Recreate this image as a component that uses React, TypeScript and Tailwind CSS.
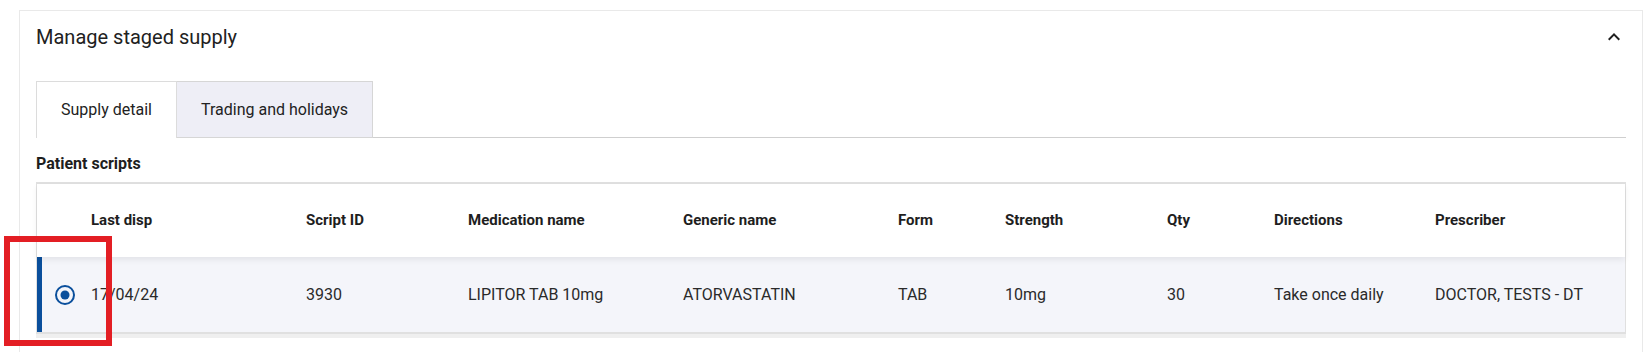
import React from "react";

const columns = [
  "Last disp",
  "Script ID",
  "Medication name",
  "Generic name",
  "Form",
  "Strength",
  "Qty",
  "Directions",
  "Prescriber",
];

const row = [
  "17/04/24",
  "3930",
  "LIPITOR TAB 10mg",
  "ATORVASTATIN",
  "TAB",
  "10mg",
  "30",
  "Take once daily",
  "DOCTOR, TESTS - DT",
];

const grid =
  "grid grid-cols-[54px_215px_162px_215px_215px_107px_162px_107px_161px_1fr]";

export default function App() {
  return (
    <div
      className="relative h-[352px] overflow-hidden bg-white pt-[10px] pl-[19px] pr-[1px] text-[#222]"
      style={{ fontFamily: "Roboto, 'Liberation Sans', sans-serif" }}
    >
      <div className="border border-[#e9e9e9] px-4 pt-3 pb-8">
        {/* header */}
        <div className="flex items-center justify-between">
          <h2 className="text-[20px] leading-[28px] text-[#212121]">Manage staged supply</h2>
          <svg className="w-6 h-6 text-[#1f1f1f]" viewBox="0 0 24 24" fill="currentColor">
            <path d="M7.41 15.41L12 10.83l4.59 4.58L18 14l-6-6-6 6z" />
          </svg>
        </div>

        {/* tabs */}
        <div className="mt-[30px] flex items-end">
          <button className="h-[57px] px-6 border-l border-t border-r border-[#dcdcdc] bg-white text-[16px] text-[#222]">
            Supply detail
          </button>
          <button className="h-[57px] px-6 border-t border-r border-b border-[#d6d6d6] bg-[#eeeef6] text-[16px] text-[#222]">
            Trading and holidays
          </button>
          <div className="flex-1 border-b border-[#cfcfcf]" />
        </div>

        <h3 className="mt-[14px] text-[16px] leading-6 font-bold text-[#1e1e1e]">Patient scripts</h3>

        {/* table */}
        <div className="mt-[6px]">
          <div className="border-x border-t-2 border-b-2 border-[#e0e0e0]">
            <div className={`${grid} relative z-10 h-[73px] items-center bg-white shadow-[0_3px_6px_rgba(0,0,0,0.07)]`}>
              <div />
              {columns.map((c) => (
                <div key={c} className="text-[15px] font-bold text-[#1e1e1e]">
                  {c}
                </div>
              ))}
            </div>
            <div className={`${grid} h-[75px] items-center bg-[#f4f5fa]`}>
              <div className="flex h-full items-center">
                <div className="w-[5px] h-full bg-[#0a4f9c]" />
                <svg className="ml-[13px] w-5 h-5" viewBox="0 0 20 20">
                  <circle cx="10" cy="10" r="9" fill="none" stroke="#0a4f9c" strokeWidth="2" />
                  <circle cx="10" cy="10" r="4.5" fill="#0a4f9c" />
                </svg>
              </div>
              {row.map((v, i) => (
                <div key={i} className="text-[16px] text-[#2a2a2a]">
                  {v}
                </div>
              ))}
            </div>
          </div>
          <div className="h-1 bg-[#efefef]" />
        </div>
      </div>

      {/* annotation box */}
      <div className="absolute z-20 left-[4px] top-[236px] w-[108px] h-[110px] border-[6px] border-solid border-[#e31e24]" />
    </div>
  );
}
